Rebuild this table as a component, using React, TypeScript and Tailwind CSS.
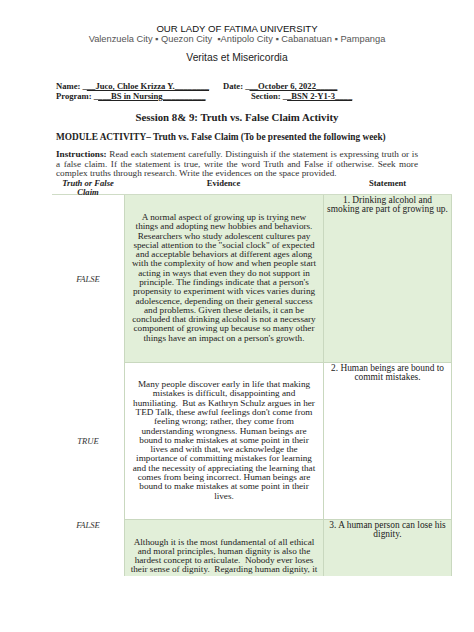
const serif = "font-['Liberation_Serif','Times_New_Roman',serif]"
const sans = "font-['Liberation_Sans',Arial,sans-serif]"

const rows = [
  {
    claim: "FALSE",
    claimTop: false,
    green: true,
    height: "h-[168px]",
    statement: ["1. Drinking alcohol and", "smoking are part of growing up."],
    evidence: [
      "A normal aspect of growing up is trying new",
      "things and adopting new hobbies and behaviors.",
      "Researchers who study adolescent cultures pay",
      "special attention to the \"social clock\" of expected",
      "and acceptable behaviors at different ages along",
      "with the complexity of how and when people start",
      "acting in ways that even they do not support in",
      "principle. The findings indicate that a person's",
      "propensity to experiment with vices varies during",
      "adolescence, depending on their general success",
      "and problems. Given these details, it can be",
      "concluded that drinking alcohol is not a necessary",
      "component of growing up because so many other",
      "things have an impact on a person's growth.",
    ],
  },
  {
    claim: "TRUE",
    claimTop: false,
    green: false,
    height: "h-[157px]",
    statement: ["2. Human beings are bound to", "commit mistakes."],
    evidence: [
      "Many people discover early in life that making",
      "mistakes is difficult, disappointing and",
      "humiliating.  But as Kathryn Schulz argues in her",
      "TED Talk, these awful feelings don't come from",
      "feeling wrong; rather, they come from",
      "understanding wrongness. Human beings are",
      "bound to make mistakes at some point in their",
      "lives and with that, we acknowledge the",
      "importance of committing mistakes for learning",
      "and the necessity of appreciating the learning that",
      "comes from being incorrect. Human beings are",
      "bound to make mistakes at some point in their",
      "lives.",
    ],
  },
  {
    claim: "FALSE",
    claimTop: true,
    green: true,
    height: "h-[60px]",
    statement: ["3. A human person can lose his", "dignity."],
    evidence: [
      "Although it is the most fundamental of all ethical",
      "and moral principles, human dignity is also the",
      "hardest concept to articulate.  Nobody ever loses",
      "their sense of dignity.  Regarding human dignity, it",
    ],
  },
]

export default function App() {
  return (
    <div className="w-[474px] h-[632px] bg-white overflow-hidden text-[#222]">
      <div className="h-[576px] overflow-hidden pt-[24px]">
        <div className={`${sans} text-center`}>
          <div className="text-[9.6px] leading-[10px] text-[#111]">OUR LADY OF FATIMA UNIVERSITY</div>
          <div className="text-[9.3px] leading-[10px] text-[#555]">
            Valenzuela City ▪ Quezon City &nbsp;▪Antipolo City ▪ Cabanatuan ▪ Pampanga
          </div>
          <div className="mt-[9px] text-[10.3px] leading-[10px] text-[#222]">Veritas et Misericordia</div>
        </div>

        <div className={`${serif} font-bold text-[8.6px] leading-[10px] mt-[18px] pl-[56px]`}>
          <div className="flex">
            <span className="w-[167px] whitespace-pre">
              Name: _<span className="underline">__Juco, Chloe Krizza Y.________</span>
            </span>
            <span className="whitespace-pre">
              Date: _<span className="underline">__October 6, 2022_____</span>
            </span>
          </div>
          <div className="flex">
            <span className="w-[195px] whitespace-pre">
              Program: _<span className="underline">___BS in Nursing__________</span>
            </span>
            <span className="whitespace-pre">
              Section: _<span className="underline">_BSN 2-Y1-3____</span>
            </span>
          </div>
        </div>

        <div className={`${serif} font-bold text-[10.8px] leading-[12px] text-center mt-[10px]`}>
          Session 8&amp; 9: Truth vs. False Claim Activity
        </div>

        <div className={`${serif} font-bold text-[9.3px] leading-[10px] mt-[9px] pl-[56px] whitespace-nowrap`}>
          MODULE ACTIVITY– Truth vs. False Claim (To be presented the following week)
        </div>

        <div className={`${serif} text-[9.2px] leading-[9.5px] mt-[8px] ml-[56px] w-[362px] text-[#333]`}>
          <div className="text-justify [text-align-last:justify] whitespace-nowrap">
            <span className="font-bold text-[#222]">Instructions:</span> Read each statement carefully. Distinguish if the statement is expressing truth or is
          </div>
          <div className="text-justify [text-align-last:justify] whitespace-nowrap">
            a false claim. If the statement is true, write the word Truth and False if otherwise. Seek more
          </div>
          <div className="whitespace-nowrap">
            complex truths through research. Write the evidences on the space provided.
          </div>
        </div>

        <div className={`${serif} ml-[52px] w-[400px]`}>
          <div className="grid grid-cols-[72px_199px_129px] h-[15px] font-bold text-[8.6px] leading-[9px]">
            <div className="italic text-center">
              Truth or False
              <br />
              Claim
            </div>
            <div className="text-center">Evidence</div>
            <div className="text-center">Statement</div>
          </div>

          <div className="border-t border-[#cfdcc6]">
            {rows.map((r, i) => (
              <div key={i} className={`grid grid-cols-[72px_199px_129px] ${r.height}`}>
                <div
                  className={`flex justify-center italic text-[8.6px] leading-[10px] text-[#333] ${
                    r.claimTop ? "items-start" : "items-center"
                  }`}
                >
                  {r.claim}
                </div>
                <div
                  className={`flex flex-col items-center text-center border-l border-b border-[#c9d8bf] text-[9.2px] leading-[9.3px] ${
                    r.green ? "bg-[#e2efd9]" : "bg-white"
                  } ${r.claimTop ? "justify-start pt-[18px]" : "justify-center"}`}
                >
                  {r.evidence.map((line, j) => (
                    <div key={j} className="whitespace-pre">
                      {line}
                    </div>
                  ))}
                </div>
                <div
                  className={`text-center border-l border-r border-b border-[#c9d8bf] text-[9.4px] leading-[9.5px] pt-[1px] ${
                    r.green ? "bg-[#e2efd9]" : "bg-white"
                  }`}
                >
                  {r.statement.map((line, j) => (
                    <div key={j} className="whitespace-pre">
                      {line}
                    </div>
                  ))}
                </div>
              </div>
            ))}
          </div>
        </div>
      </div>
    </div>
  )
}
